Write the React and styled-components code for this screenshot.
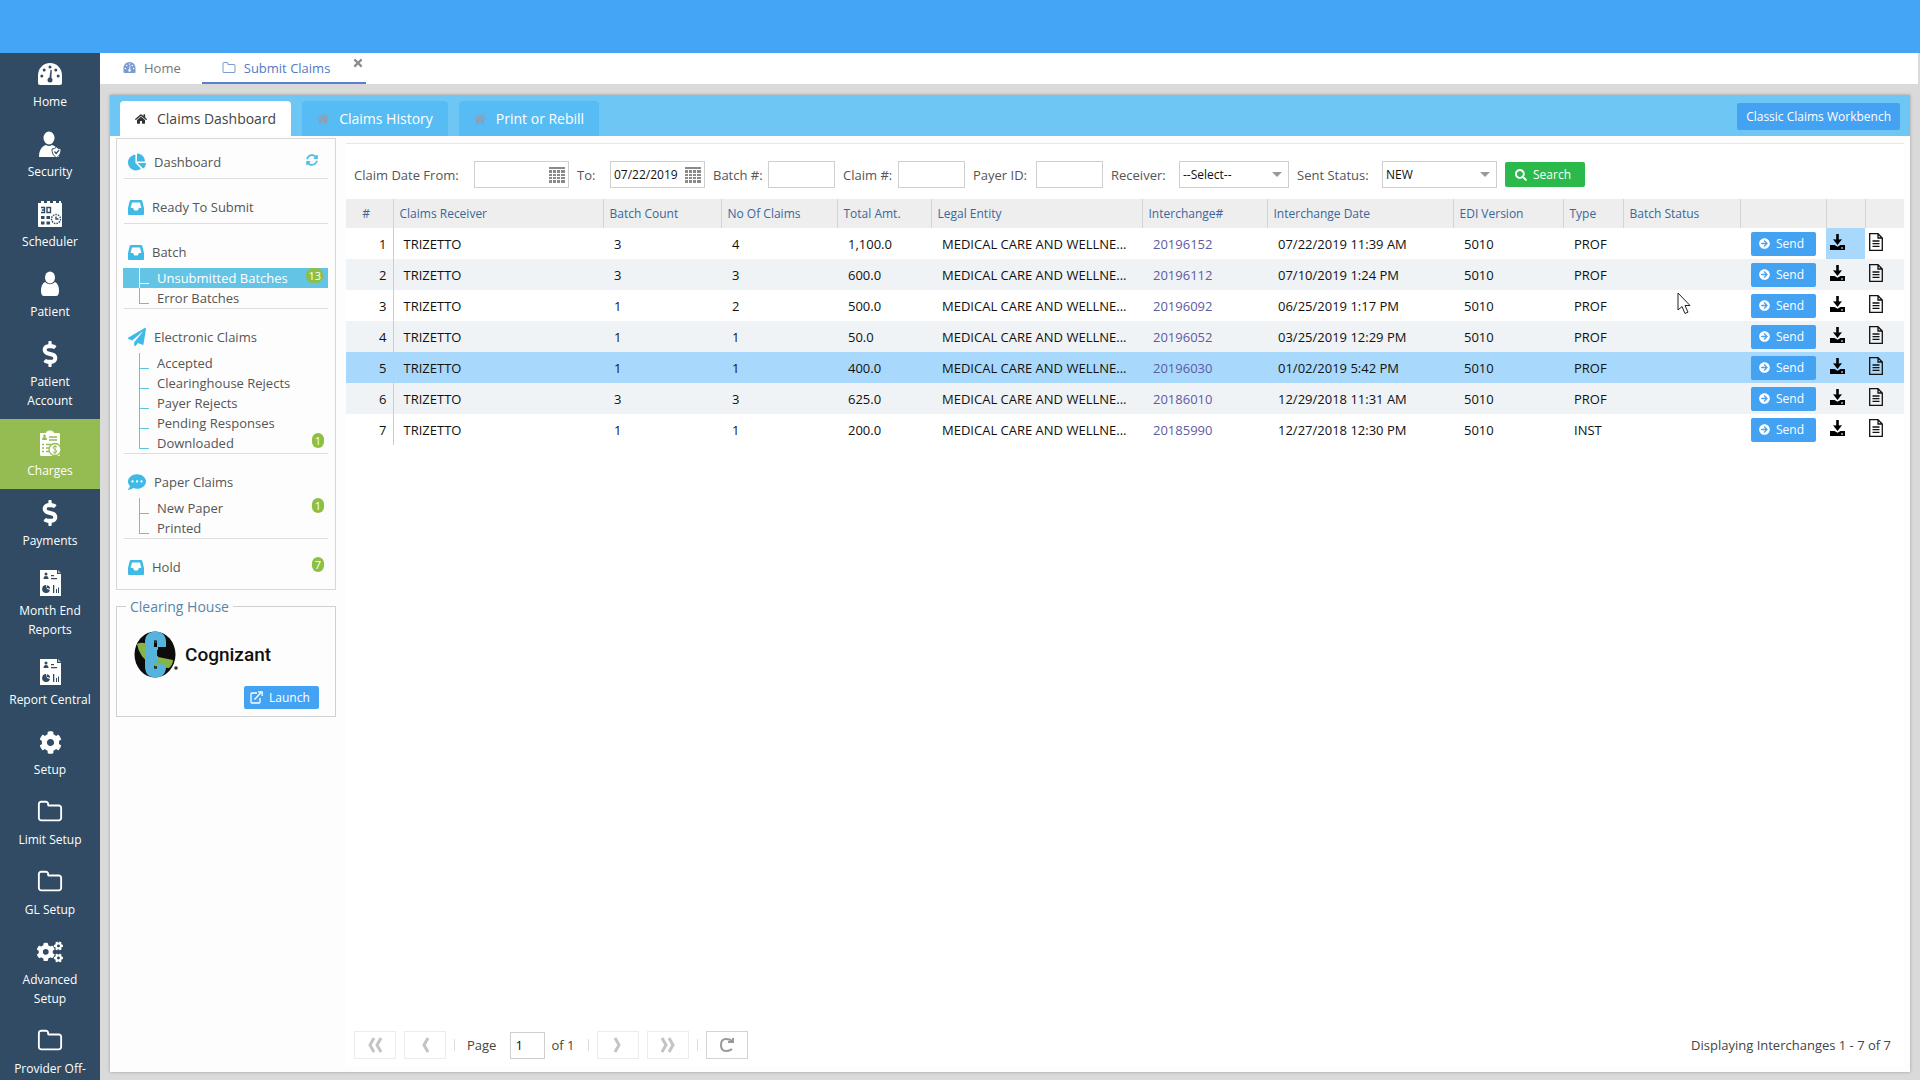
import React from "react";
import styled, { createGlobalStyle } from "styled-components";
import {
  FaDollarSign,
  FaCog,
  FaCogs,
  FaHome,
  FaChartPie,
  FaPaperPlane,
  FaCommentDots,
  FaSearch,
  FaArrowCircleRight,
  FaTimes,
  FaSyncAlt,
} from "react-icons/fa";

const GlobalStyle = createGlobalStyle`
  * {
    box-sizing: border-box;
  }
  body {
    margin: 0;
    overflow: hidden;
    background: #dbdadb;
  }
  body, button, input, select {
    font-family: "Open Sans", "Noto Sans", sans-serif;
    font-size: 13px;
    color: #111;
  }
  button {
    cursor: pointer;
  }
  a {
    text-decoration: none;
  }
`;

/* ---------- layout ---------- */

const Page = styled.div`
  display: flex;
  flex-direction: column;
  height: 100vh;
`;

const TopBar = styled.header`
  flex: none;
  height: 53px;
  background: #44a4f6;
`;

const Body = styled.div`
  flex: 1;
  display: flex;
  min-height: 0;
`;

const Workspace = styled.div`
  flex: 1;
  display: flex;
  flex-direction: column;
  min-width: 0;
  padding-right: 2px;
`;

/* ---------- side menu ---------- */

const SideMenu = styled.nav`
  flex: none;
  width: 100px;
  background: #304b63;
  overflow: hidden;
`;

const MenuItem = styled.a`
  display: flex;
  flex-direction: column;
  align-items: center;
  padding: 10px 4px 9px;
  background: ${(p) => (p.$active ? "#94bc53" : "transparent")};
  color: #fff;
  font-size: 12px;
  line-height: 19px;
  text-align: center;
  white-space: pre-line;
  &:first-child {
    padding-top: 7px;
  }
`;

const MenuIcon = styled.span`
  display: flex;
  align-items: center;
  justify-content: center;
  height: 28px;
  margin-bottom: 4px;
  font-size: 26px;
`;

/* ---------- window tabs ---------- */

const WindowTabs = styled.nav`
  flex: none;
  display: flex;
  height: 31px;
  padding-left: 23px;
  background: #fff;
`;

const WindowTab = styled.div`
  display: flex;
  align-items: center;
  gap: 8px;
  margin-right: ${(p) => (p.$active ? 0 : 21)}px;
  padding: 0 ${(p) => (p.$active ? "2px 0 20px" : "0")};
  border-bottom: 2px solid ${(p) => (p.$active ? "#5b7fd4" : "transparent")};
  color: #7c9bd0;
  a {
    color: ${(p) => (p.$active ? "#5678bf" : "#777")};
  }
`;

const CloseButton = styled.button`
  align-self: flex-start;
  display: flex;
  margin: 4px 0 0 14px;
  padding: 0;
  border: none;
  background: none;
  color: #8a8a8a;
  font-size: 12px;
`;

/* ---------- claims window ---------- */

const ClaimsWindow = styled.main`
  flex: 1;
  display: flex;
  flex-direction: column;
  min-height: 0;
  margin: 11px 8px 8px 10px;
  background: #fdfdfd;
  box-shadow: 0 0 3px #999;
`;

const ClaimsTabs = styled.div`
  flex: none;
  display: flex;
  align-items: flex-end;
  height: 41px;
  padding: 0 10px;
  background: #6dc6f3;
`;

const ClaimsTab = styled.button`
  display: flex;
  align-items: center;
  gap: 10px;
  height: 35px;
  margin-right: 11px;
  padding: 0 15px;
  border: none;
  border-radius: 4px 4px 0 0;
  background: ${(p) => (p.$active ? "#fff" : "#57bcf3")};
  color: ${(p) => (p.$active ? "#444" : "#fff")};
  font-size: 14px;
  svg {
    color: ${(p) => (p.$active ? "#333" : "#8f9fb3")};
    font-size: 12px;
  }
`;

const BlueButton = styled.button`
  display: flex;
  align-items: center;
  gap: 6px;
  height: ${(p) => p.$height || 24}px;
  padding: 0 9px;
  border: none;
  border-radius: 2px;
  background: #44a2f3;
  color: #fff;
  font-size: 12px;
`;

const ClassicButton = styled(BlueButton)`
  margin: 0 0 6px auto;
`;

const Columns = styled.div`
  flex: 1;
  display: flex;
  gap: 10px;
  min-height: 0;
  padding: 2px 6px 6px;
`;

/* ---------- left column ---------- */

const LeftColumn = styled.aside`
  flex: none;
  width: 220px;
`;

const StatusTree = styled.div`
  border: 1px solid #d8d8d8;
  padding: 0 7px;
`;

const Section = styled.section`
  padding-top: ${(p) => (p.$first ? 13 : 18)}px;
  border-bottom: 1px solid #dedede;
  &:last-child {
    height: 50px;
    border-bottom: none;
  }
`;

const SectionTitle = styled.a`
  display: flex;
  align-items: center;
  height: 20px;
  margin-bottom: 6px;
  padding-left: 4px;
  color: #555;
  svg {
    flex: none;
    margin-right: 8px;
    color: #3fb9e6;
    font-size: 18px;
  }
`;

const RefreshButton = styled.button`
  display: flex;
  margin: 0 10px 4px auto;
  padding: 0;
  border: none;
  background: none;
  svg {
    margin: 0;
    color: #4cbfe4;
    font-size: 12px;
  }
`;

const TreeList = styled.ul`
  margin: 0;
  padding: 0;
  list-style: none;
`;

const TreeItem = styled.li`
  display: flex;
  height: 20px;
  margin-left: -1px;
  padding-left: 16px;
  background: ${(p) => (p.$selected ? "#63c4e6" : "transparent")};
  color: ${(p) => (p.$selected ? "#fff" : "#5cc4e4")};
  &::before {
    content: "";
    width: 10px;
    margin-right: 8px;
    background:
      linear-gradient(currentColor, currentColor) 0 0 / 1px 100% no-repeat,
      linear-gradient(currentColor, currentColor) 0 15px / 10px 1px no-repeat;
  }
  &:last-child::before {
    height: 16px;
  }
  a {
    line-height: 20px;
    color: ${(p) => (p.$selected ? "#fff" : "#555")};
  }
`;

const Badge = styled.span`
  align-self: flex-start;
  margin: 0 ${(p) => (p.$wide ? 5 : 4)}px 0 auto;
  min-width: 12px;
  padding: 0 2px;
  border-radius: 7px;
  background: #8dbf45;
  color: #fff;
  font-size: 11px;
  line-height: 15px;
  text-align: center;
`;

const ClearingHouse = styled.fieldset`
  display: flex;
  flex-direction: column;
  height: 120px;
  margin: 7px 0 0;
  padding: 15px 16px 7px 17px;
  border: 1px solid #d0d0d0;
  legend {
    margin-left: -8px;
    padding: 0 4px;
    color: #5785ab;
    font-size: 14px;
    line-height: 19px;
  }
`;

const Brand = styled.div`
  display: flex;
  align-items: center;
  gap: 7px;
  margin-bottom: 8px;
  font-family: Roboto, sans-serif;
  font-size: 19px;
  font-weight: 500;
`;

const LaunchButton = styled(BlueButton)`
  align-self: flex-end;
  width: 75px;
  padding: 0 6px;
`;

/* ---------- right column ---------- */

const Content = styled.div`
  flex: 1;
  display: flex;
  flex-direction: column;
  min-width: 0;
  margin-top: 5px;
  border-top: 1px solid #e6e8e8;
  background: #fff;
`;

const Filters = styled.form`
  display: flex;
  align-items: center;
  gap: 8px;
  padding: 17px 8px 11px;
  color: #555;
`;

const Field = styled.div`
  display: flex;
  align-items: center;
  label {
    width: ${(p) => p.$label}px;
    white-space: nowrap;
  }
`;

const TextBox = styled.input`
  width: ${(p) => p.$width || 67}px;
  height: 27px;
  padding: 0 4px;
  border: 1px solid #cfcfcf;
  background: #fff;
`;

const DateBox = styled.div`
  display: flex;
  align-items: center;
  width: 95px;
  height: 27px;
  padding-right: 3px;
  border: 1px solid #cfcfcf;
  background: #fff;
  input {
    flex: 1;
    min-width: 0;
    padding: 0 0 0 3px;
    border: none;
    background: none;
    font-size: 12px;
  }
  button {
    display: flex;
    padding: 0;
    border: none;
    background: none;
  }
`;

const SelectBox = styled.div`
  position: relative;
  width: ${(p) => p.$width}px;
  select {
    width: 100%;
    height: 27px;
    padding: 0 3px;
    border: 1px solid #cfcfcf;
    border-radius: 0;
    background: #fff;
    font-size: 12px;
    appearance: none;
  }
  &::after {
    content: "";
    position: absolute;
    top: 11px;
    right: 7px;
    border: 5px solid transparent;
    border-top-color: #999;
    border-bottom: none;
    pointer-events: none;
  }
`;

const SearchButton = styled(BlueButton)`
  width: 80px;
  padding: 0 10px;
  background: #2bb94b;
`;

const Grid = styled.table`
  width: 100%;
  table-layout: fixed;
  border-collapse: collapse;
  th {
    height: 29px;
    padding: 0 0 0 6px;
    border-right: 1px solid #d4d4d4;
    background: #eeeeee;
    color: #39679b;
    font-size: 12px;
    font-weight: 400;
    text-align: left;
  }
  th:first-child {
    padding: 0 6px 0 0;
    text-align: center;
  }
  th:last-child {
    border-right: none;
  }
  td {
    height: 31px;
    padding: 0 0 0 11px;
    white-space: nowrap;
  }
  td:first-child {
    padding: 0 6px;
    border-right: 1px solid #ccc;
    text-align: right;
  }
  td:nth-child(2) {
    padding-left: 10px;
  }
  td a {
    color: #5f5aa2;
  }
`;

const Row = styled.tr`
  background: ${(p) => (p.$selected ? "#a8d9fc" : "#fff")};
  &:nth-child(even) {
    background: #eff3f6;
  }
`;

const IconCell = styled.td`
  background: ${(p) => (p.$focused ? "#a8d9fc" : "transparent")};
  && {
    padding: 0 4px 4px;
  }
`;

const IconButton = styled.button`
  display: flex;
  padding: 0;
  border: none;
  background: none;
`;

const SendButton = styled(BlueButton)`
  width: 65px;
  padding: 0 8px;
`;

const Pager = styled.footer`
  display: flex;
  align-items: center;
  margin-top: auto;
  padding: 0 13px 7px 8px;
  color: #444;
`;

const PagerButton = styled.button`
  display: flex;
  align-items: center;
  justify-content: center;
  width: 42px;
  height: 28px;
  margin-right: 8px;
  border: 1px solid ${(p) => (p.$enabled ? "#d4d4d4" : "#ececec")};
  background: #fff;
`;

const Separator = styled.span`
  width: 1px;
  height: 12px;
  margin-right: ${(p) => p.$after || 8}px;
  background: #ddd;
`;

const PageLabel = styled.label`
  display: flex;
  align-items: center;
  gap: 14px;
`;

const PageTotal = styled.span`
  margin: 0 14px 0 6px;
`;

const Summary = styled.output`
  margin-left: auto;
`;

const Pointer = styled.svg`
  position: absolute;
  top: 292px;
  left: 1677px;
`;

/* ---------- icons ---------- */

const GaugeIcon = ({ size = 26, hole = "#304b63" }) => (
  <svg width={size} height={size} viewBox="0 0 26 24">
    <path
      d="M13 1C6 1 1 6.500 1 13.500V21q0 2 2 2h20q2 0 2-2v-7.500C25 6.500 20 1 13 1z"
      fill="currentColor"
    />
    <g fill={hole}>
      <circle cx="4.800" cy="14" r="1.500" />
      <circle cx="7.200" cy="8" r="1.500" />
      <circle cx="13" cy="5" r="1.500" />
      <circle cx="18.800" cy="8" r="1.500" />
      <circle cx="21.200" cy="14" r="1.500" />
      <circle cx="13" cy="18" r="2.500" />
      <path d="M12.300 17l1.200-9h1.300l-.5 9z" />
    </g>
  </svg>
);

const SecurityIcon = () => (
  <svg width="26" height="27" viewBox="0 0 26 27" fill="#fff">
    <ellipse cx="12" cy="7" rx="5.500" ry="6.500" />
    <path d="M2 26c0-7 3-11 7-12q3 2 6 0c4 1 7 5 7 12z" />
    <path d="M15 18q3 0 4.500-2 1.500 2 4.500 2c0 4-1 6.500-4.500 8.500C16 24.500 15 22 15 18z" stroke="#304b63" />
    <path d="M17.500 20.500l1.700 2 2.800-3.300" fill="none" stroke="#304b63" strokeWidth="1.300" />
  </svg>
);

const SchedulerIcon = () => (
  <svg width="26" height="28" viewBox="0 0 26 28">
    <path d="M1 3h3V1h3v2h3V1h3v2h3V1h3v2h3V1h2v2h1v23q0 1-1 1H2q-1 0-1-1z" fill="#fff" />
    <g fill="none" stroke="#304b63" strokeWidth="1.400">
      <path d="M4 7.500h3.500v5H4M4.800 10h2.700M10 7.500h3.500v5H10z" />
      <circle cx="19" cy="19" r="4.500" strokeDasharray="1.500 1" />
      <path d="M19 16.500V19h2.500" />
    </g>
    <path
      d="M4 16h3.500v3H4zM9.500 16H13v3H9.500zM4 21.500h3.500v3H4zM9.500 21.500H13v3H9.500z"
      fill="#304b63"
    />
  </svg>
);

const PatientIcon = () => (
  <svg width="20" height="26" viewBox="0 0 20 26" fill="#fff">
    <ellipse cx="10" cy="6.500" rx="5" ry="6" />
    <path d="M5 11q5 4.500 10 0 4 2 4 9 0 5-3 5H4q-3 0-3-5 0-7 4-9z" />
  </svg>
);

const ChargesIcon = () => (
  <svg width="22" height="27" viewBox="0 0 22 27">
    <path d="M1 3h6q0-2 4-2.500Q15 1 15 3h5q1 0 1 1v20q0 2-1 2H2q-1 0-1-2z" fill="#fff" />
    <g fill="none" stroke="#94bc53" strokeWidth="1.300">
      <path d="M10 7h8M10 10h8M3 14.500h2M7 14.500h5M3 18h2M7 18h3M3 21.500h2M7 21.500h3" />
      <circle cx="16" cy="19.500" r="6" fill="#fff" />
    </g>
    <path d="M3 10q0-3 2.500-3T8 10z" fill="#94bc53" />
    <circle cx="5.500" cy="5.800" r="1.300" fill="#94bc53" />
    <path
      d="M18 17q-2-1.500-3.500-.3t1.300 2.600 1.500 3-3.500-.3M16 15v9"
      fill="none"
      stroke="#94bc53"
      strokeWidth="1"
    />
  </svg>
);

const ReportIcon = () => (
  <svg width="21" height="26" viewBox="0 0 21 26">
    <path d="M0 0h17v4h4v22H0z" fill="#fff" />
    <path d="M18 0l3 3h-3z" fill="#a9b6c2" />
    <g fill="#304b63">
      <circle cx="6" cy="4" r="1.500" />
      <path d="M3.500 9q0-3 2.500-3t2.500 3zM11 5h3v1.300h-3zM11 8h6v1.300h-6z" />
      <path d="M6 15a4 4 0 1 0 4 5l-3-1zM7 15.200V18l3 .8q.300-3-3-3.600z" />
      <path d="M13 15h1.300v8H13zM16 19h1v4h-1zM18 17.500h1V23h-1z" />
    </g>
  </svg>
);

const FolderIcon = ({ size = 26 }) => (
  <svg width={size} height={size} viewBox="0 0 1792 1792" fill="currentColor">
    <path d="M1600 1312v-704q0-40-28-68t-68-28h-704q-40 0-68-28t-28-68v-64q0-40-28-68t-68-28h-320q-40 0-68 28t-28 68v960q0 40 28 68t68 28h1216q40 0 68-28t28-68zm128-704v704q0 92-66 158t-158 66h-1216q-92 0-158-66t-66-158v-960q0-92 66-158t158-66h320q92 0 158 66t66 158v32h672q92 0 158 66t66 158z" />
  </svg>
);

const InboxIcon = () => (
  <svg width="16" height="15" viewBox="0 0 16 15">
    <path
      fillRule="evenodd"
      d="M3 0h10q1 0 1.300 1L16 8v6q0 1-1 1H1q-1 0-1-1V8l1.700-7Q2 0 3 0zm1 2.500L2.600 8H5l1.300 2.500h3.400L11 8h2.400L12 2.500z"
      fill="currentColor"
    />
  </svg>
);

const DownloadIcon = () => (
  <svg width="15" height="16" viewBox="0 0 15 16" fill="#000">
    <path d="M6.200 0h2.600v5.500L12 5.200 7.500 11 3 5.200l3.200.3z" />
    <path d="M0 11h4.500l3 1.800 3-1.800H15v5H0z" />
    <path d="M11 13.500h2v1h-2z" fill="#fff" />
  </svg>
);

const DocumentIcon = () => (
  <svg width="14" height="18" viewBox="0 0 14 18" fill="none" stroke="#111" strokeWidth="1.300">
    <path d="M.7.7h8.300l4.300 4.300v12.300H.7zM9 .7V5h4.300" />
    <path d="M3.500 8h7M3.500 10.700h7M3.500 13.400h7" />
  </svg>
);

const CalendarIcon = () => (
  <svg width="16" height="16" viewBox="0 0 16 16" fill="#8a8a8a">
    <path d="M0 0h16v2H0z" />
    <path d="M0 3h3v3H0zM4 3h3v3H4zM8 3h3v3H8zM12 3h4v3h-4z" />
    <path d="M0 7h3v2H0zM4 7h3v2H4zM8 7h3v2H8zM12 7h4v2h-4z" />
    <path d="M0 10h3v2H0zM4 10h3v2H4zM8 10h3v2H8zM12 10h4v2h-4z" />
    <path d="M0 13h3v3H0zM4 13h3v3H4zM8 13h3v3H8zM12 13h4v3h-4z" />
  </svg>
);

const LaunchIcon = () => (
  <svg width="13" height="13" viewBox="0 0 13 13" fill="none" stroke="#fff" strokeWidth="1.300">
    <path d="M7 2H2Q1 2 1 3v8q0 1 1 1h7q1 0 1-1V7M4.500 8.500l6.500-7M8 .8h4.200V5" />
  </svg>
);

const BrandMark = () => (
  <svg width="44" height="47" viewBox="0 0 44 47">
    <ellipse cx="21" cy="23.500" rx="20.500" ry="23" fill="#0c0c0c" />
    <path d="M3 13q6-3 11 1l8 12 17 4q-1 5-4 7-10 0-17-3Q5 26 3 13z" fill="#86b545" />
    <path
      d="M27.500 16v-5q0-6-6-6t-6 6v25q0 6 6 6t6-6v-4"
      fill="none"
      stroke="#55b3dc"
      strokeWidth="9"
    />
    <path d="M18 16h6v16h-6z" fill="#55b3dc" />
    <path d="M23 19h8v3l-3 3h-5z" fill="#0c0c0c" />
    <path d="M20.500 9h2v3h-2zM20.500 35h2v3h-2z" fill="#26424f" />
    <path d="M24 26l15 3q-1 4-3 6l-12-3z" fill="#86b545" />
    <circle cx="42" cy="37" r="1.800" fill="#333" />
  </svg>
);

const Chevrons = ({ double, next }) => (
  <svg width="16" height="16" viewBox="0 0 16 16" fill="none" stroke="#c4c4c4" strokeWidth="3">
    <g transform={next ? "rotate(180 8 8)" : undefined}>
      <path d={double ? "M7 1L3 8l4 7M14 1l-4 7 4 7" : "M11 1L7 8l4 7"} />
    </g>
  </svg>
);

const ReloadIcon = () => (
  <svg width="16" height="16" viewBox="0 0 16 16" fill="none" stroke="#999" strokeWidth="2">
    <path d="M14 6V1M14 5H9M13 4Q11 2 7 2 2 2 2 8t5 6q4 0 6-2" />
  </svg>
);

/* ---------- data ---------- */

const menu = [
  { label: "Home", icon: <GaugeIcon /> },
  { label: "Security", icon: <SecurityIcon /> },
  { label: "Scheduler", icon: <SchedulerIcon /> },
  { label: "Patient", icon: <PatientIcon /> },
  { label: "Patient\nAccount", icon: <FaDollarSign /> },
  { label: "Charges", icon: <ChargesIcon />, active: true },
  { label: "Payments", icon: <FaDollarSign /> },
  { label: "Month End\nReports", icon: <ReportIcon /> },
  { label: "Report Central", icon: <ReportIcon /> },
  { label: "Setup", icon: <FaCog size={23} /> },
  { label: "Limit Setup", icon: <FolderIcon /> },
  { label: "GL Setup", icon: <FolderIcon /> },
  { label: "Advanced\nSetup", icon: <FaCogs /> },
  { label: "Provider Off-", icon: <FolderIcon /> },
];

const sections = [
  { title: "Ready To Submit", icon: <InboxIcon /> },
  {
    title: "Batch",
    icon: <InboxIcon />,
    items: [["Unsubmitted Batches", 13], ["Error Batches"]],
  },
  {
    title: "Electronic Claims",
    icon: <FaPaperPlane />,
    items: [
      ["Accepted"],
      ["Clearinghouse Rejects"],
      ["Payer Rejects"],
      ["Pending Responses"],
      ["Downloaded", 1],
    ],
  },
  {
    title: "Paper Claims",
    icon: <FaCommentDots />,
    items: [["New Paper", 1], ["Printed"]],
  },
  { title: "Hold", icon: <InboxIcon />, count: 7 },
];

const columns = [
  ["#", 47],
  ["Claims Receiver", 210],
  ["Batch Count", 118],
  ["No Of Claims", 116],
  ["Total Amt.", 94],
  ["Legal Entity", 211],
  ["Interchange#", 125],
  ["Interchange Date", 186],
  ["EDI Version", 110],
  ["Type", 60],
  ["Batch Status", 117],
  ["", 86],
  ["", 39],
  ["", 39],
];

const claims = [
  [3, 4, "1,100.0", "20196152", "07/22/2019 11:39 AM", "PROF"],
  [3, 3, "600.0", "20196112", "07/10/2019 1:24 PM", "PROF"],
  [1, 2, "500.0", "20196092", "06/25/2019 1:17 PM", "PROF"],
  [1, 1, "50.0", "20196052", "03/25/2019 12:29 PM", "PROF"],
  [1, 1, "400.0", "20196030", "01/02/2019 5:42 PM", "PROF"],
  [3, 3, "625.0", "20186010", "12/29/2018 11:31 AM", "PROF"],
  [1, 1, "200.0", "20185990", "12/27/2018 12:30 PM", "INST"],
];

/* ---------- components ---------- */

const StatusPanel = () => (
  <StatusTree>
    <Section $first>
      <SectionTitle as="div">
        <FaChartPie />
        Dashboard
        <RefreshButton aria-label="Refresh">
          <FaSyncAlt />
        </RefreshButton>
      </SectionTitle>
    </Section>
    {sections.map(({ title, icon, items, count }) => (
      <Section key={title}>
        <SectionTitle href="#">
          {icon}
          {title}
          {count && <Badge>{count}</Badge>}
        </SectionTitle>
        {items && (
          <TreeList>
            {items.map(([label, n]) => (
              <TreeItem key={label} $selected={n === 13}>
                <a href="#">{label}</a>
                {n && <Badge $wide={n > 9}>{n}</Badge>}
              </TreeItem>
            ))}
          </TreeList>
        )}
      </Section>
    ))}
  </StatusTree>
);

const FilterBar = () => (
  <Filters onSubmit={(e) => e.preventDefault()}>
    <Field $label={120}>
      <label htmlFor="from">Claim Date From:</label>
      <DateBox>
        <input id="from" />
        <button type="button" aria-label="Pick from date">
          <CalendarIcon />
        </button>
      </DateBox>
    </Field>
    <Field $label={33}>
      <label htmlFor="to">To:</label>
      <DateBox>
        <input id="to" defaultValue="07/22/2019" />
        <button type="button" aria-label="Pick to date">
          <CalendarIcon />
        </button>
      </DateBox>
    </Field>
    <Field $label={55}>
      <label htmlFor="batch">Batch #:</label>
      <TextBox id="batch" />
    </Field>
    <Field $label={55}>
      <label htmlFor="claim">Claim #:</label>
      <TextBox id="claim" />
    </Field>
    <Field $label={63}>
      <label htmlFor="payer">Payer ID:</label>
      <TextBox id="payer" />
    </Field>
    <Field $label={68}>
      <label htmlFor="receiver">Receiver:</label>
      <SelectBox $width={110}>
        <select id="receiver">
          <option>--Select--</option>
        </select>
      </SelectBox>
    </Field>
    <Field $label={85}>
      <label htmlFor="status">Sent Status:</label>
      <SelectBox $width={115}>
        <select id="status">
          <option>NEW</option>
        </select>
      </SelectBox>
    </Field>
    <SearchButton $height={25}>
      <FaSearch />
      Search
    </SearchButton>
  </Filters>
);

const ClaimsGrid = () => (
  <Grid>
    <colgroup>
      {columns.map(([, width], i) => (
        <col key={i} width={width} />
      ))}
    </colgroup>
    <thead>
      <tr>
        {columns.map(([label], i) => (
          <th key={i}>{label}</th>
        ))}
      </tr>
    </thead>
    <tbody>
      {claims.map(([batches, count, total, id, date, type], i) => (
        <Row key={id} $selected={i === 4}>
          <td>{i + 1}</td>
          <td>TRIZETTO</td>
          <td>{batches}</td>
          <td>{count}</td>
          <td>{total}</td>
          <td>MEDICAL CARE AND WELLNE...</td>
          <td>
            <a href="#">{id}</a>
          </td>
          <td>{date}</td>
          <td>5010</td>
          <td>{type}</td>
          <td />
          <td>
            <SendButton>
              <FaArrowCircleRight size={11} />
              Send
            </SendButton>
          </td>
          <IconCell $focused={i === 0}>
            <IconButton aria-label="Download">
              <DownloadIcon />
            </IconButton>
          </IconCell>
          <IconCell>
            <IconButton aria-label="View report">
              <DocumentIcon />
            </IconButton>
          </IconCell>
        </Row>
      ))}
    </tbody>
  </Grid>
);

const App = () => {
  return (
    <Page>
      <GlobalStyle />
      <TopBar />
      <Body>
        <SideMenu>
          {menu.map(({ label, icon, active }) => (
            <MenuItem key={label} href="#" $active={active}>
              <MenuIcon>{icon}</MenuIcon>
              {label}
            </MenuItem>
          ))}
        </SideMenu>
        <Workspace>
          <WindowTabs>
            <WindowTab>
              <GaugeIcon size={13} hole="#fff" />
              <a href="#">Home</a>
            </WindowTab>
            <WindowTab $active>
              <FolderIcon size={14} />
              <a href="#">Submit Claims</a>
              <CloseButton aria-label="Close tab">
                <FaTimes />
              </CloseButton>
            </WindowTab>
          </WindowTabs>
          <ClaimsWindow>
            <ClaimsTabs>
              <ClaimsTab $active>
                <FaHome />
                Claims Dashboard
              </ClaimsTab>
              <ClaimsTab>
                <FaHome />
                Claims History
              </ClaimsTab>
              <ClaimsTab>
                <FaHome />
                Print or Rebill
              </ClaimsTab>
              <ClassicButton $height={27}>Classic Claims Workbench</ClassicButton>
            </ClaimsTabs>
            <Columns>
              <LeftColumn>
                <StatusPanel />
                <ClearingHouse>
                  <legend>Clearing House</legend>
                  <Brand>
                    <BrandMark />
                    Cognizant
                  </Brand>
                  <LaunchButton>
                    <LaunchIcon />
                    Launch
                  </LaunchButton>
                </ClearingHouse>
              </LeftColumn>
              <Content>
                <FilterBar />
                <ClaimsGrid />
                <Pager>
                  <PagerButton aria-label="First page">
                    <Chevrons double />
                  </PagerButton>
                  <PagerButton aria-label="Previous page">
                    <Chevrons />
                  </PagerButton>
                  <Separator $after={12} />
                  <PageLabel>
                    Page
                    <TextBox $width={35} defaultValue="1" />
                  </PageLabel>
                  <PageTotal>of 1</PageTotal>
                  <Separator />
                  <PagerButton aria-label="Next page">
                    <Chevrons next />
                  </PagerButton>
                  <PagerButton aria-label="Last page">
                    <Chevrons double next />
                  </PagerButton>
                  <Separator />
                  <PagerButton $enabled aria-label="Reload">
                    <ReloadIcon />
                  </PagerButton>
                  <Summary>Displaying Interchanges 1 - 7 of 7</Summary>
                </Pager>
              </Content>
            </Columns>
          </ClaimsWindow>
        </Workspace>
      </Body>
      <Pointer width="14" height="23" viewBox="0 0 14 23">
        <path d="M1 1v17l4-3.500 3 7 3-1.300-3-6.700h5z" fill="#fff" stroke="#222" />
      </Pointer>
    </Page>
  );
};

export default App;
